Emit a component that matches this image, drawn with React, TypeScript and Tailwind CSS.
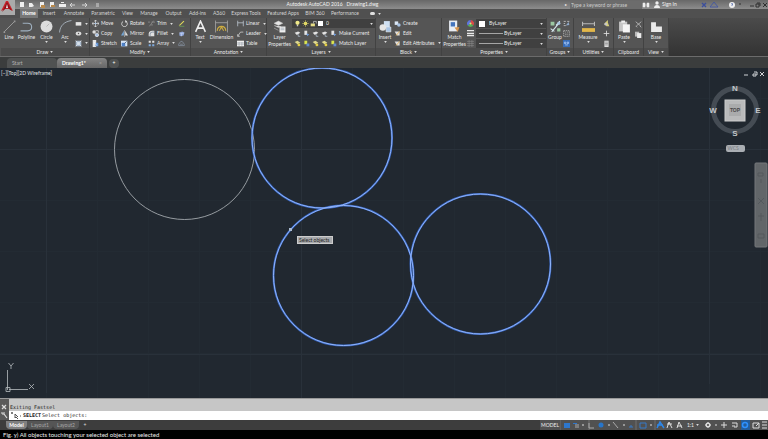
import type { ReactNode } from "react"

interface ChildProps {
  children?: ReactNode
}

interface PanelProps extends ChildProps {
  title: string
  width: string
  arrow?: boolean
}

const menuTabs = [
  { label: "Home", width: "w-[18px]" },
  { label: "Insert", width: "w-[22px]" },
  { label: "Annotate", width: "w-[28px]" },
  { label: "Parametric", width: "w-[30px]" },
  { label: "View", width: "w-[19px]" },
  { label: "Manage", width: "w-[24px]" },
  { label: "Output", width: "w-[25px]" },
  { label: "Add-ins", width: "w-[23px]" },
  { label: "A360", width: "w-[20px]" },
  { label: "Express Tools", width: "w-[34px]" },
  { label: "Featured Apps", width: "w-[40px]" },
  { label: "BIM 360", width: "w-[24px]" },
  { label: "Performance", width: "w-[36px]" },
]

const iconPaths: Record<string, ReactNode> = {
  rect: <rect x="1" y="3" width="8" height="5" fill="#e4e4e4" />,
  ellipse: (
    <>
      <ellipse cx="5" cy="5" rx="4" ry="3" fill="#dcdcdc" />
      <circle cx="5" cy="5" r="1" fill="#555" />
    </>
  ),
  hatch: (
    <>
      <rect x="1" y="1" width="8" height="8" fill="#a8b9cd" />
      <path d="M1 1l2 2M9 1L7 3M1 9l2-2M9 9L7 7" stroke="#eee" />
      <rect x="3" y="3" width="4" height="4" fill="#d5e0ec" />
    </>
  ),
  move: (
    <>
      <path d="M5 0v10M0 5h10M3 2l2-2 2 2M3 8l2 2 2-2M2 3L0 5l2 2M8 3l2 2-2 2" stroke="#e5e5e5" fill="none" />
      <rect x="4" y="4" width="2" height="2" fill="#9fc4ee" />
    </>
  ),
  copy: (
    <>
      <circle cx="3" cy="3" r="2.5" fill="#dedede" />
      <circle cx="7" cy="7" r="2.5" fill="#a9c3e6" stroke="#eee" />
      <path d="M5 1h4v3" stroke="#e5e5e5" fill="none" />
    </>
  ),
  stretch: (
    <>
      <path d="M1 0h5v10H1z" fill="#e6e6e6" />
      <path d="M5 4h4v5H5z" fill="#5f93d8" />
      <path d="M3 3l4 5" stroke="#fff" />
    </>
  ),
  rotate: (
    <>
      <path d="M3 2a4 4 0 1 0 4 0" stroke="#dedede" fill="none" strokeWidth="1.3" />
      <path d="M6 0l3 2-3 2z" fill="#dedede" />
    </>
  ),
  mirror: (
    <>
      <path d="M4 1v7H0z" fill="#74a7d8" />
      <path d="M6 1v7h4z" fill="#e0e0e0" />
      <path d="M5 0v10" stroke="#ddd" strokeWidth=".7" />
    </>
  ),
  scale: (
    <>
      <rect x="0" y="1" width="9" height="8" fill="#d9e6f6" />
      <rect x="1" y="4" width="5" height="5" fill="#4f82c9" />
      <path d="M5 5l3-3" stroke="#345" />
    </>
  ),
  trim: <path d="M0 3h3M5 3h5M2 9L8 1M4 7h3" stroke="#8b8b8b" fill="none" strokeWidth="1.2" />,
  fillet: (
    <>
      <path d="M1 9V5a5 5 0 0 1 5-4h3v8z" fill="#e1e1e1" />
      <path d="M3 9V6a3 3 0 0 1 3-3h3" stroke="#6b7d94" fill="none" />
    </>
  ),
  array: (
    <>
      <path d="M1 1h3v3H1zM6 1h3v3H6z" fill="#e1e1e1" />
      <path d="M1 6h3v3H1zM6 6h3v3H6z" fill="#7fabe0" />
    </>
  ),
  pencil: (
    <>
      <path d="M1 8L8 1l1 1-6 6z" fill="#e4dc5a" />
      <path d="M2 9h7" stroke="#6fae56" />
    </>
  ),
  explode: (
    <>
      <path d="M2 4l4-2 3 2-1 4-4 1-2-1z" fill="#91a8dc" />
      <path d="M2 4l3 1 4-1M5 5v4" stroke="#dbe5fa" fill="none" strokeWidth=".7" />
    </>
  ),
  offset: <path d="M1 8h8V6L6 2H4L1 6zM3 6h4" stroke="#8997a8" fill="none" />,
  linear: <path d="M1 1v8M9 1v8M1 4h8" stroke="#c9d3df" fill="none" />,
  leader: <path d="M1 9l4-6h4M1 9V6M1 9h3" stroke="#dedede" fill="none" />,
  table: (
    <>
      <rect x="0" y="1" width="10" height="8" fill="#f0f0f0" />
      <path d="M0 4h10M0 6h10M3 3v6M7 3v6" stroke="#8a949e" strokeWidth=".7" />
    </>
  ),
  layerA: (
    <>
      <path d="M1 4l5-2 3 2-5 3z" fill="#e4e4e4" />
      <path d="M6 6v3h3" stroke="#b8c8d8" fill="none" />
    </>
  ),
  layerB: (
    <>
      <path d="M2 1h4v6H2z" fill="#e4e4e4" />
      <path d="M5 5l4 1-3 3z" fill="#6e9cdd" />
    </>
  ),
  layerC: (
    <>
      <path d="M1 3l4-2 4 3-4 2z" fill="#dfd98f" />
      <circle cx="7" cy="7" r="2" fill="#e4cf45" />
    </>
  ),
  layerD: (
    <>
      <path d="M2 1h4v5H2z" fill="#dbe44c" />
      <path d="M5 5h4v4H5z" fill="#6286cf" />
    </>
  ),
  create: (
    <>
      <path d="M1 2h5v5H1z" fill="#dbe7f5" />
      <circle cx="7" cy="7" r="2.5" fill="#a9c4e5" />
    </>
  ),
  edit: (
    <>
      <path d="M1 2h7v6H4z" fill="#e0e0e0" />
      <path d="M3 8l5-6" stroke="#e6ab3a" />
    </>
  ),
  colors: (
    <>
      <path d="M5 5V0a5 5 0 0 1 4 8z" fill="#d94848" />
      <path d="M5 5L9 8a5 5 0 0 1-8 0z" fill="#54b157" />
      <path d="M5 5L1 8a5 5 0 0 1 4-8z" fill="#5c75de" />
      <circle cx="5" cy="5" r="1.4" fill="#eadc72" />
    </>
  ),
  lines: <path d="M0 1h10M0 5h10M0 8h10" stroke="#e8e8e8" strokeWidth="1.8" />,
  linetype: <path d="M0 2h10M0 5h10M0 8h10M3 0v10M7 0v10" stroke="#929292" strokeWidth=".7" />,
  cut: <path d="M1 1l7 6M9 1L2 7M1 7l2 2M7 7l2 2" stroke="#d3d3d3" fill="none" />,
  pages: (
    <>
      <path d="M0 1h6v7H0z" fill="#bcbcbc" />
      <path d="M3 3h6v7H3z" fill="#ececec" />
    </>
  ),
  group: (
    <>
      <path d="M1 2h3M6 2h3M1 5h2M1 8h3" stroke="#dadada" />
      <path d="M4 8l4-5 1 4z" fill="#8fa9c9" />
    </>
  ),
  groupEdit: <path d="M1 1h8v8H1zM3 3h1M6 3h1M3 6h4" stroke="#cccccc" fill="none" strokeDasharray="2 1" />,
  groupOn: (
    <>
      <rect width="10" height="10" fill="#386db8" />
      <path d="M2 3h2v2H2zM6 3h2v2H6zM3 7h4" stroke="#b8d4ff" fill="none" />
    </>
  ),
  quick: (
    <>
      <path d="M2 5l5-5v4l2 5H5z" fill="#d6cf78" />
      <circle cx="4" cy="6" r="2" fill="#c7c7c7" />
    </>
  ),
  plus: <path d="M5 1v8M1 5h8" stroke="#e0e0e0" strokeWidth="1.2" />,
  calc: (
    <>
      <rect x="2" y="1" width="6" height="9" fill="#dedede" />
      <path d="M3 3h4M3 5h4M3 7h4" stroke="#888" />
    </>
  ),
  bulb: (
    <>
      <circle cx="5" cy="4" r="3" fill="#efe989" />
      <path d="M4 7h2v2H4z" fill="#ccc" />
    </>
  ),
  sun: (
    <>
      <circle cx="5" cy="5" r="2.5" fill="#f2e768" />
      <path d="M5 0v10M0 5h10M2 2l6 6M8 2L2 8" stroke="#d8cf64" strokeWidth=".7" />
    </>
  ),
  lock: (
    <>
      <rect x="1" y="5" width="6" height="4" fill="#e5dc84" />
      <path d="M5 5V2h4v3" stroke="#ccc" fill="none" />
    </>
  ),
}

function Icon({ name }: { name: string }) {
  return (
    <svg viewBox="0 0 10 10" className="size-[7px] shrink-0" aria-hidden="true">
      {iconPaths[name]}
    </svg>
  )
}

function Arrow() {
  return (
    <svg viewBox="0 0 4 3" className="h-[2px] w-[3px] shrink-0" aria-hidden="true">
      <path d="M0 0h4L2 3z" fill="#dcdcdc" />
    </svg>
  )
}

function Panel({ title, width, arrow = true, children }: PanelProps) {
  return (
    <section className={`flex shrink-0 flex-col border-r border-[#424242] ${width}`}>
      <div className="flex h-[30px] pt-px">{children}</div>
      <h2 className="flex h-[8px] items-center justify-center gap-[2px] bg-[#4b4b4b]">
        {title}
        {arrow && <Arrow />}
      </h2>
    </section>
  )
}

function BigTool({ label, width, arrow, children }: ChildProps & { label: string; width: string; arrow?: boolean }) {
  return (
    <button className={`flex shrink-0 flex-col items-center pt-px ${width}`}>
      <svg viewBox="0 0 24 24" className="size-[13px]" fill="none" aria-hidden="true">
        {children}
      </svg>
      <span className="w-full pt-px text-center whitespace-pre-line">{label}</span>
      {arrow && <Arrow />}
    </button>
  )
}

function Tools({ width, items }: { width: string; items: { icon: string; label?: string; arrow?: boolean }[] }) {
  return (
    <div className={`flex shrink-0 flex-col ${width}`}>
      {items.map((item, index) => (
        <button
          key={index}
          aria-label={item.label ?? item.icon}
          className="flex h-[10px] items-center gap-[2px] whitespace-nowrap"
        >
          <Icon name={item.icon} />
          {item.label && <span>{item.label}</span>}
          {item.arrow && (
            <span className="ml-px">
              <Arrow />
            </span>
          )}
        </button>
      ))}
    </div>
  )
}

function TitleBar() {
  return (
    <header className="flex h-[9px] items-center bg-linear-to-b from-[#686868] to-[#8d8d8d] pl-[20px] text-[#f4f4f4]">
      <svg viewBox="0 0 80 8" className="h-[8px] w-[80px] shrink-0" aria-hidden="true">
        <path d="M0 1h4v5H0zM9 2h3l2 3-2 1H9zM20 1h4v5h-4zM30 1h4v5h-4zM39 3h7v3h-7zM41 1h3v1h-3z" fill="#eee" />
        <path d="M21 4h4v3h-4zM31 4h4v2h-4z" fill="#b98a4d" />
        <path d="M50 4h5M50 4l2-2M50 4l2 2M62 4h5M67 4l-2-2M67 4l-2 2M76 3h3M76 5h3" stroke="#d5d5d5" fill="none" />
      </svg>
      <h1 className="min-w-0 flex-1 text-center whitespace-pre">Autodesk AutoCAD 2016   Drawing1.dwg</h1>
      <span className="w-[5px] text-[4px]">▸</span>
      <input
        aria-label="Search"
        placeholder="Type a keyword or phrase"
        className="h-[8px] w-[72px] shrink-0 bg-[#6c6c6c] px-px placeholder:text-[#cccccc]"
      />
      <svg viewBox="0 0 20 8" className="h-[8px] w-[20px] shrink-0" aria-hidden="true">
        <path d="M1 2h2v4H1zM5 2h2v4H5zM3 4h2" fill="#eee" stroke="#eee" strokeWidth=".5" />
        <circle cx="15" cy="2" r="1.7" fill="#eee" />
        <path d="M12 7c0-4 6-4 6 0z" fill="#eee" />
      </svg>
      <button className="w-[34px] shrink-0 text-left">Sign In</button>
      <svg viewBox="0 0 72 8" className="h-[8px] w-[72px] shrink-0" fill="none" stroke="#eee" aria-hidden="true">
        <path d="M6 2l4 4M10 2L6 6" stroke="#3c4f9c" strokeWidth="1.4" />
        <path d="M14 6l4-5 4 5z" stroke="#485b9f" />
        <circle cx="36" cy="4" r="3" fill="#eee" stroke="none" />
        <path d="M35 3q1-1 2 0l-1 1v1" stroke="#4660aa" strokeWidth=".7" />
        <path d="M43 3h2M54 5h4M60 3h3v3h-3zM61 2h3v3M67 2l4 4M71 2l-4 4" stroke="#303030" />
      </svg>
    </header>
  )
}

function MenuTabs() {
  return (
    <nav className="flex h-[9px] items-center bg-[#505050] pl-[20px] text-[#d4d4d4]">
      {menuTabs.map((tab, index) => (
        <button
          key={tab.label}
          className={`h-[9px] shrink-0 text-center whitespace-nowrap ${tab.width} ${
            index === 0 ? "bg-[#777777] font-bold text-white" : ""
          }`}
        >
          {tab.label}
        </button>
      ))}
      <span className="ml-[7px] h-[3px] w-[5px] rounded-xs bg-[#e0e0e0]" />
      <span className="ml-[3px]">
        <Arrow />
      </span>
    </nav>
  )
}

function PropertySelect({ label, swatch }: { label: string; swatch?: boolean }) {
  return (
    <div className="flex h-[9px] items-center bg-[#404040] px-[3px]">
      {swatch ? <span className="mr-[4px] size-[6px] bg-white" /> : <span className="mr-px h-px w-[24px] bg-[#a5a5a5]" />}
      <select aria-label={label} className="min-w-0 flex-1 appearance-none">
        <option>ByLayer</option>
      </select>
      <Arrow />
    </div>
  )
}

function Ribbon() {
  return (
    <div className="flex h-[39px] overflow-hidden border-b border-[#6b6b6b] bg-linear-to-b from-[#4b4b4b] to-[#333333] text-[#eaeaea]">
      <div className="flex shrink-0 bg-[#555555] pl-px">
        <Panel title="Draw" width="w-[89px]">
          <BigTool label="Line" width="w-[16px]">
            <path d="M2 22L22 2" stroke="#aaa" strokeWidth="1.5" />
            <path d="M1 21h3v3H1zM20 1h3v3h-3z" fill="#999" />
          </BigTool>
          <BigTool label="Polyline" width="w-[19px]">
            <path d="M1 20h13c10 0 10-14 0-14H5" stroke="#9fb0c0" strokeWidth="2" />
          </BigTool>
          <BigTool label="Circle" width="w-[21px]" arrow>
            <circle cx="12" cy="12" r="11" fill="#dcdcdc" />
            <path d="M12 12l5-5" stroke="#999" />
          </BigTool>
          <BigTool label="Arc" width="w-[16px]" arrow>
            <path d="M1 23C2 10 10 3 23 1" stroke="#a4aeb8" strokeWidth="1.8" />
          </BigTool>
          <Tools
            width="w-[16px] pl-[2px]"
            items={[
              { icon: "rect", arrow: true },
              { icon: "ellipse", arrow: true },
              { icon: "hatch", arrow: true },
            ]}
          />
        </Panel>
        <Panel title="Modify" width="w-[101px]">
          <Tools
            width="w-[29px] pl-[2px]"
            items={[
              { icon: "move", label: "Move" },
              { icon: "copy", label: "Copy" },
              { icon: "stretch", label: "Stretch" },
            ]}
          />
          <Tools
            width="w-[29px] pl-[2px]"
            items={[
              { icon: "rotate", label: "Rotate" },
              { icon: "mirror", label: "Mirror" },
              { icon: "scale", label: "Scale" },
            ]}
          />
          <Tools
            width="w-[30px]"
            items={[
              { icon: "trim", label: "Trim", arrow: true },
              { icon: "fillet", label: "Fillet", arrow: true },
              { icon: "array", label: "Array", arrow: true },
            ]}
          />
          <Tools width="w-[8px]" items={[{ icon: "pencil" }, { icon: "explode" }, { icon: "offset" }]} />
        </Panel>
        <Panel title="Annotation" width="w-[76px]">
          <BigTool label="Text" width="w-[18px]" arrow>
            <path d="M3 22L12 2l9 20M6 15h12" stroke="#eee" strokeWidth="2.8" />
          </BigTool>
          <BigTool label="Dimension" width="w-[25px]">
            <path d="M1 1v22M23 1v22M1 5h22" stroke="#a8a8a8" strokeWidth="1.5" />
            <path d="M4 20c1-11 15-11 16 0M8 20l4-7 4 7" stroke="#cfad3e" strokeWidth="2" />
          </BigTool>
          <Tools
            width="w-[32px] pl-[3px]"
            items={[
              { icon: "linear", label: "Linear", arrow: true },
              { icon: "leader", label: "Leader", arrow: true },
              { icon: "table", label: "Table" },
            ]}
          />
        </Panel>
        <Panel title="Layers" width="w-[109px]">
          <BigTool label={"Layer\nProperties"} width="w-[25px]">
            <path d="M2 6l8-4 8 4-8 4zM2 10l8 4 5-2M2 15l8 4" fill="#e6e6e6" stroke="#c5c5c5" />
            <path d="M12 12h11v11H12z" fill="#eee" />
            <path d="M14 15h7M14 18h7" stroke="#789" />
          </BigTool>
          <div className="min-w-0 flex-1">
            <div className="flex h-[9px] items-center gap-px bg-[#404040] px-[2px]">
              <Icon name="bulb" />
              <Icon name="sun" />
              <Icon name="lock" />
              <span className="size-[5px] bg-white" />
              <select aria-label="Layer" className="min-w-0 flex-1 appearance-none pl-[2px]">
                <option>0</option>
              </select>
              <Arrow />
            </div>
            <div className="flex h-[10px] items-center gap-[2px] pl-[2px]">
              <Icon name="layerA" />
              <Icon name="layerB" />
              <Icon name="layerA" />
              <Icon name="layerA" />
              <Icon name="layerB" />
              <button className="whitespace-nowrap">Make Current</button>
            </div>
            <div className="flex h-[10px] items-center gap-[2px] pl-[2px]">
              <Icon name="layerC" />
              <Icon name="layerD" />
              <Icon name="layerC" />
              <Icon name="layerC" />
              <Icon name="layerD" />
              <button className="whitespace-nowrap">Match Layer</button>
            </div>
          </div>
        </Panel>
        <Panel title="Block" width="w-[66px]">
          <BigTool label="Insert" width="w-[18px]" arrow>
            <path d="M9 2h11v11H9z" fill="#cfe0f3" />
            <circle cx="7" cy="14" r="6" fill="#e6e6e6" />
            <path d="M13 13h9v9h-9z" fill="#a8c4e5" stroke="#eee" />
          </BigTool>
          <Tools
            width="w-[47px]"
            items={[
              { icon: "create", label: "Create" },
              { icon: "edit", label: "Edit" },
              { icon: "edit", label: "Edit Attributes", arrow: true },
            ]}
          />
        </Panel>
        <Panel title="Properties" width="w-[105px]">
          <BigTool label={"Match\nProperties"} width="w-[25px]">
            <path d="M2 1h15v20H2z" fill="#e8edf3" />
            <path d="M5 4h8v8H5z" fill="#4374bc" />
            <path d="M12 14l9-1-3 9z" fill="#d8954c" />
          </BigTool>
          <Tools width="w-[9px]" items={[{ icon: "colors" }, { icon: "lines" }, { icon: "linetype" }]} />
          <div className="flex min-w-0 flex-1 flex-col gap-px">
            <PropertySelect label="Object color" swatch />
            <PropertySelect label="Lineweight" />
            <PropertySelect label="Linetype" />
          </div>
        </Panel>
        <Panel title="Groups" width="w-[27px]">
          <BigTool label="Group" width="w-[16px]">
            <path d="M3 3h7v7H3zM15 15h6v6h-6z" fill="#9bc8a1" />
            <path d="M3 16l7 5M20 2l-7 8M5 22l15-18" stroke="#d6e8ef" strokeWidth="2" />
            <circle cx="18" cy="6" r="3" fill="#a9c4df" />
          </BigTool>
          <Tools width="w-[9px]" items={[{ icon: "group" }, { icon: "groupEdit" }, { icon: "groupOn" }]} />
        </Panel>
        <Panel title="Utilities" width="w-[40px]">
          <BigTool label="Measure" width="w-[28px]" arrow>
            <path d="M1 3v8M23 3v8M1 7h22" stroke="#b9b9b9" strokeWidth="2" />
            <path d="M0 15h24v7H0z" fill="#e3b74a" />
          </BigTool>
          <Tools width="w-[10px] pl-px" items={[{ icon: "quick" }, { icon: "plus" }, { icon: "calc" }]} />
        </Panel>
        <Panel title="Clipboard" width="w-[30px]" arrow={false}>
          <BigTool label="Paste" width="w-[20px]" arrow>
            <path d="M2 3h15v18H2z" fill="#c6c6c6" />
            <path d="M6 1h7v4H6z" fill="#eee" />
            <path d="M9 8h13v15H9z" fill="#f5f5f5" />
          </BigTool>
          <Tools width="w-[9px] pl-px" items={[{ icon: "cut" }, { icon: "pages" }]} />
        </Panel>
        <Panel title="View" width="w-[25px]">
          <BigTool label="Base" width="w-[24px]" arrow>
            <path d="M2 4h9v8h11v10H2z" fill="#eaeaea" />
          </BigTool>
        </Panel>
      </div>
    </div>
  )
}

function FileTabs() {
  return (
    <nav className="flex h-[11px] items-end bg-[#3b3d3d] pl-[7px] text-[#b5b5b5]">
      <button className="h-[10px] w-[50px] rounded-t-sm bg-[#505252] pl-[5px] text-left">Start</button>
      <button className="flex h-[10px] w-[50px] items-center justify-between rounded-t-sm bg-linear-to-b from-[#858585] to-[#676767] px-[5px] font-bold text-white">
        Drawing1*<span className="font-normal text-[#aaaaaa]">×</span>
      </button>
      <button className="ml-[2px] h-[9px] w-[10px] rounded-sm bg-[#505252] text-center text-white">+</button>
    </nav>
  )
}

// Grid lines are spaced 51 units, with a few stronger major lines
function Drawing() {
  const columns = Array.from({ length: 15 }, (_, i) => 46 + i * 51)
  const rows = Array.from({ length: 6 }, (_, i) => 30 + i * 51)

  return (
    <svg viewBox="0 0 768 330" preserveAspectRatio="xMinYMin slice" className="block w-full" fill="none">
      <g stroke="#232b33">
        {columns.map((x) => (
          <path key={x} d={`M${x}.5 0v330`} />
        ))}
        {rows.map((y) => (
          <path key={y} d={`M0 ${y}.5h768`} />
        ))}
      </g>
      <path d="M46.5 0v325M301.5 0v330M709.5 0v316M0 81.5h768M0 286.5h768" stroke="#29313a" />
      <circle cx="184.5" cy="81.5" r="70" stroke="#a3a8ad" strokeWidth="0.9" />
      <g stroke="#3764bd" strokeWidth="2">
        <circle cx="322" cy="70" r="70" />
        <circle cx="343.5" cy="207.5" r="70" />
        <circle cx="480.5" cy="196" r="70" />
      </g>
      <g stroke="#91b4fa" strokeWidth="1">
        <circle cx="322" cy="70" r="70" />
        <circle cx="343.5" cy="207.5" r="70" />
        <circle cx="480.5" cy="196" r="70" />
      </g>
      <path d="M289 160h3v3h-3z" fill="#a9bad2" />
      <path d="M7.5 302v20M9 321.5h19M6 319.5h4v4H6zM8.5 295l2.5 3 2.5-3M11 298v3M29 316l5 5M34 316l-5 5" stroke="#b8bcc0" strokeWidth=".8" />
    </svg>
  )
}

function ViewCube() {
  return (
    <div className="absolute top-[14px] right-[7px] flex w-[52px] flex-col items-center">
      <svg viewBox="0 0 52 58" className="w-full font-['Liberation_Sans',sans-serif] font-bold" textAnchor="middle">
        <circle cx="26" cy="28" r="21.5" fill="none" stroke="#454c54" strokeWidth="5" />
        <rect x="16" y="18" width="20" height="21" fill="#b9babb" stroke="#cccccc" />
        <rect x="20" y="22" width="12" height="12" fill="#aaabac" />
        <text x="26" y="30" fontSize="5" fill="#484848">
          TOP
        </text>
        <g fontSize="8" fill="#c2c6ca">
          <text x="26" y="9">N</text>
          <text x="26" y="54">S</text>
          <text x="4" y="31">W</text>
          <text x="49" y="31">E</text>
        </g>
      </svg>
      <button className="mt-[5px] h-[7px] w-[19px] rounded-xs bg-[#aaaeb3] pl-[2px] text-left text-[#777c82]">WCS</button>
    </div>
  )
}

function Canvas() {
  return (
    <main className="relative overflow-hidden bg-[#212830]">
      <Drawing />
      <p className="absolute top-[2px] left-px text-[#e4e7ea]">[−][Top][2D Wireframe]</p>
      <p className="absolute top-[168px] left-[297px] h-[8px] w-[36px] border border-[#cccccc] bg-[#a7a9ac] pl-px leading-[6px] text-[#222222]">
        Select objects
      </p>
      <svg viewBox="0 0 22 6" className="absolute top-[3px] right-[3px] h-[6px] w-[22px]" fill="none" stroke="#d0d3d6">
        <path d="M1 4h4M10 3h3v2h-3zM11 1h3v3M17 1l4 4M21 1l-4 4" />
      </svg>
      <ViewCube />
      <svg viewBox="0 0 14 86" className="absolute top-[94px] right-0 h-[86px] w-[14px]" fill="none" stroke="#54595d">
        <rect x="1" y="1" width="12" height="84" rx="1" fill="#626669" stroke="#74777a" />
        <path d="M4 11h5v3H4zM7 17v4M4 36l6 6M10 36l-6 6M4 54h6M7 51v8M4 72h6v4H4z" />
      </svg>
    </main>
  )
}

function CommandLine() {
  return (
    <section className="flex h-[22px] border-t border-[#999999] bg-[#5a5a5a] font-['DejaVu_Sans_Mono',monospace]">
      <svg viewBox="0 0 9 21" className="h-[21px] w-[9px] shrink-0" stroke="#dddddd" fill="none" aria-hidden="true">
        <path d="M2 6l4 4M6 6l-4 4M4 15l3 4" strokeWidth="1.2" />
        <path d="M2 13v2h2v-2" />
      </svg>
      <div className="min-w-0 flex-1 text-[#222222]">
        <p className="flex h-[12px] items-end bg-[#c6c6c6] pl-px leading-[8px]">Exiting Fastsel</p>
        <div className="flex h-[9px] items-center bg-white pl-[2px]">
          <svg viewBox="0 0 12 8" className="h-[8px] w-[12px]" stroke="#555555" fill="none" aria-hidden="true">
            <path d="M0 1h2M1 0v2M4 2v4l1-1 2 2M4 2l3 3M9 4h1" />
          </svg>
          <label htmlFor="command" className="font-bold">
            SELECT
          </label>
          <input id="command" defaultValue="Select objects:" className="min-w-0 flex-1 pl-px" />
        </div>
      </div>
    </section>
  )
}

function StatusBar() {
  return (
    <footer className="flex h-[10px] items-center bg-[#3d3d3d] pl-[6px] text-[#a8a8a8]">
      <button className="h-[8px] w-[21px] rounded-b-sm bg-[#808080] font-bold text-white">Model</button>
      <button className="h-[8px] w-[26px] rounded-b-sm bg-[#555555]">Layout1</button>
      <button className="h-[8px] w-[26px] rounded-b-sm bg-[#555555]">Layout2</button>
      <button className="w-[12px] text-[#dddddd]">+</button>
      <div className="ml-auto flex h-[10px] items-center bg-[#515151] text-[#eeeeee]">
        <button className="w-[20px]">MODEL</button>
        <svg viewBox="0 0 124 10" className="h-[10px] w-[124px]" fill="none" aria-hidden="true">
          <path d="M0 0v10M29 0v10M76 0v10M95 0v10" stroke="#707070" />
          <path d="M4 3h6v5H4zM13 3h4v1h-4z" fill="#2e77cc" />
          <path d="M15 5h4M15 7h4M29 3v5h5M53 2l5 6" stroke="#aaaaaa" />
          <circle cx="41" cy="5" r="2.5" fill="#2775ca" />
          <path d="M69 7h4M71 5v2M80 3h6v5h-6z" stroke="#367bc9" />
          <path d="M22 5h2M48 5h2M63 5h2M90 5h2" stroke="#dddddd" />
          <path d="M97 8l3-6 4 6M97 5h6" stroke="#2d86e8" strokeWidth="1.5" />
          <path d="M107 8l2-6 3 6M107 4h5M117 8l2-6 3 6M117 6h5" stroke="#dddddd" />
        </svg>
        <button className="flex w-[18px] items-center justify-center gap-[2px]">
          1:1 <Arrow />
        </button>
        <svg viewBox="0 0 66 10" className="h-[10px] w-[66px]" fill="none" stroke="#dddddd" aria-hidden="true">
          <circle cx="6" cy="5" r="1.8" strokeWidth="1.4" />
          <path d="M6 2v1M6 7v1M3 5h1M8 5h1M13 5h2M19 5h6M22 2v6M30 3h5M30 6h3M35 3v4h-3" />
          <rect x="39" width="9" height="10" fill="#245e9e" stroke="none" />
          <circle cx="43" cy="5" r="2.5" stroke="#2e91ff" strokeWidth="1.5" />
          <path d="M51 3h6v5h-6zM54 6l3-3M60 2h5M60 5h5M60 8h5" />
        </svg>
      </div>
    </footer>
  )
}

export default function App() {
  return (
    <div className="relative w-full overflow-hidden bg-black font-['Lato',sans-serif] text-[5px] leading-[7px]">
      <TitleBar />
      <MenuTabs />
      <Ribbon />
      <FileTabs />
      <Canvas />
      <CommandLine />
      <StatusBar />
      <p className="h-[9px] bg-black pl-[3px] text-[6px] leading-[9px] text-[#eeeeee]">
        Fig. y) All objects touching your selected object are selected
      </p>
      <button aria-label="Application menu" className="absolute top-0 left-0 flex h-[15px] w-[15px] bg-[#aaaaaa]">
        <svg viewBox="0 0 15 15" className="size-[15px]">
          <path d="M1 11L6 1h2l5 10-4-2H5z" fill="#c9252b" />
          <path d="M7 2L2 12l5-5 5 4z" fill="#8d1119" />
          <path d="M6 8l1-4 1 4z" fill="#eeeeee" />
        </svg>
      </button>
    </div>
  )
}
